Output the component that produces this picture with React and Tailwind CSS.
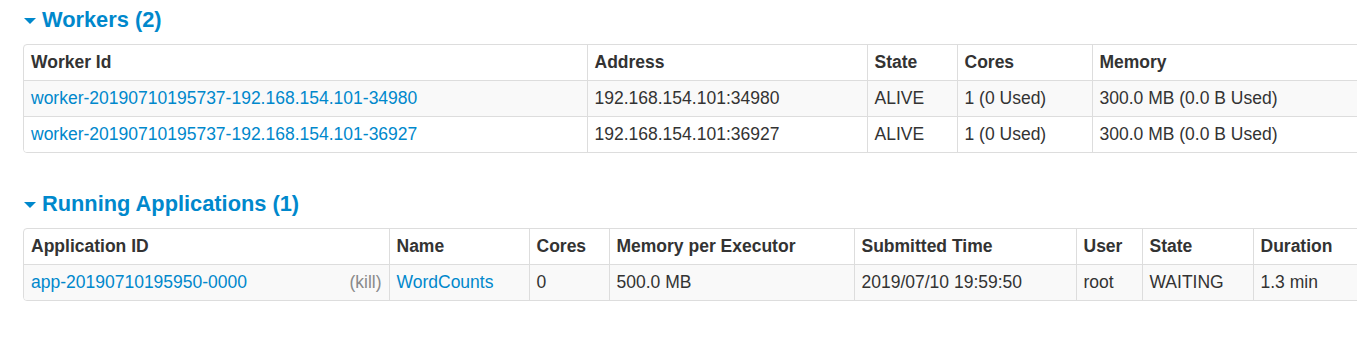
import React from "react";

const font = { fontFamily: '"Liberation Sans", Arial, sans-serif' };

function Heading({ children }) {
  return (
    <div className="flex items-center h-[40px] pl-[24px] text-[#0088cc] font-bold text-[21.8px] leading-none">
      <span className="w-0 h-0 border-l-[6px] border-r-[6px] border-t-[6px] border-l-transparent border-r-transparent border-t-[#0088cc] mr-[6px] mt-[1px]"></span>
      <span>{children}</span>
    </div>
  );
}

function Table({ cols, rows }) {
  return (
    <div className="ml-[23px] w-[1360px] border border-[#dddddd] rounded-[4px] overflow-hidden">
      <table className="table-fixed border-collapse w-full text-[17.5px] leading-[19px] text-[#333333]">
        <colgroup>
          {cols.map((c, i) => (
            <col key={i} style={{ width: c.w }} />
          ))}
        </colgroup>
        <thead>
          <tr className="h-[35px]">
            {cols.map((c, i) => (
              <th
                key={i}
                className={`text-left font-bold px-[7px] align-middle whitespace-nowrap ${i > 0 ? "border-l border-[#dddddd]" : ""}`}
              >
                {c.label}
              </th>
            ))}
          </tr>
        </thead>
        <tbody>
          {rows.map((r, ri) => (
            <tr key={ri} className={`h-[36px] border-t border-[#dddddd] ${ri % 2 === 0 ? "bg-[#f9f9f9]" : "bg-white"}`}>
              {r.map((cell, i) => (
                <td
                  key={i}
                  className={`px-[7px] align-middle whitespace-nowrap ${i > 0 ? "border-l border-[#dddddd]" : ""}`}
                >
                  {cell}
                </td>
              ))}
            </tr>
          ))}
        </tbody>
      </table>
    </div>
  );
}

const Link = ({ children }) => <span className="text-[#0088cc]">{children}</span>;

export default function App() {
  const workerCols = [
    { label: "Worker Id", w: 563 },
    { label: "Address", w: 280 },
    { label: "State", w: 90 },
    { label: "Cores", w: 135 },
    { label: "Memory", w: 292 },
  ];
  const workerRows = [
    [
      <Link>worker-20190710195737-192.168.154.101-34980</Link>,
      "192.168.154.101:34980",
      "ALIVE",
      "1 (0 Used)",
      "300.0 MB (0.0 B Used)",
    ],
    [
      <Link>worker-20190710195737-192.168.154.101-36927</Link>,
      "192.168.154.101:36927",
      "ALIVE",
      "1 (0 Used)",
      "300.0 MB (0.0 B Used)",
    ],
  ];
  const appCols = [
    { label: "Application ID", w: 365 },
    { label: "Name", w: 140 },
    { label: "Cores", w: 80 },
    { label: "Memory per Executor", w: 245 },
    { label: "Submitted Time", w: 222 },
    { label: "User", w: 66 },
    { label: "State", w: 111 },
    { label: "Duration", w: 131 },
  ];
  const appRows = [
    [
      <div className="flex justify-between">
        <Link>app-20190710195950-0000</Link>
        <span className="text-[#8a8a8a]">(kill)</span>
      </div>,
      <Link>WordCounts</Link>,
      "0",
      "500.0 MB",
      "2019/07/10 19:59:50",
      "root",
      "WAITING",
      "1.3 min",
    ],
  ];
  return (
    <div className="w-[1357px] h-[343px] overflow-hidden bg-white" style={font}>
      <div className="pt-0">
        <Heading>Workers (2)</Heading>
        <div className="mt-[4px]">
          <Table cols={workerCols} rows={workerRows} />
        </div>
        <div className="mt-[31px]">
          <Heading>Running Applications (1)</Heading>
        </div>
        <div className="mt-[4px]">
          <Table cols={appCols} rows={appRows} />
        </div>
      </div>
    </div>
  );
}
